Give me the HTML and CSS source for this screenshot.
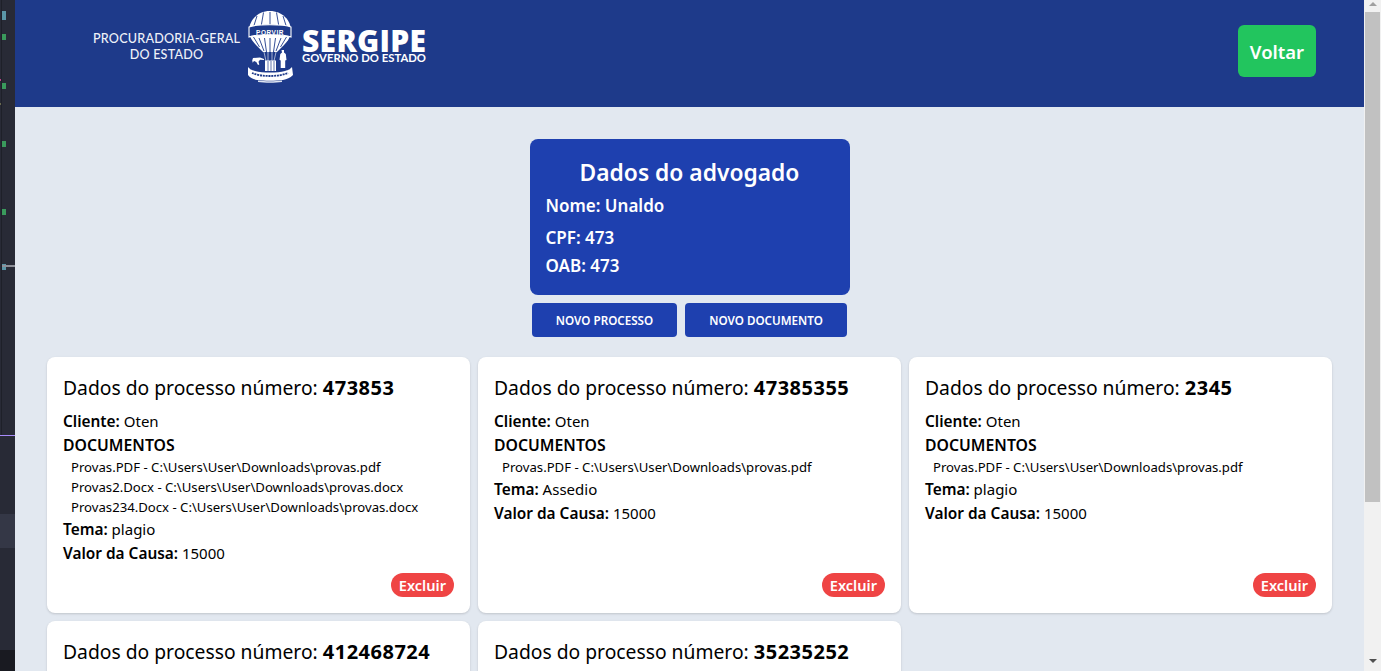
FILE: index.html
```html
<!DOCTYPE html>
<html lang="pt-BR">
<head>
<meta charset="utf-8">
<title>Dados do advogado</title>
<link rel="stylesheet" href="styles.css">
</head>
<body>
<div class="strip">
  <div class="rail">
    <span class="tick tick-blue tick-a"></span>
    <span class="tick tick-b"></span>
    <span class="mark mark-pink"></span>
    <span class="tick tick-c"></span>
    <span class="mark mark-olive"></span>
    <span class="tick tick-d"></span>
    <span class="tick tick-e"></span>
    <span class="tick tick-blue tick-f"></span>
    <span class="rule"></span>
  </div>
  <div class="panel"><div class="panel-row"></div></div>
  <div class="status"></div>
</div>
<main class="page">
  <header class="topbar">
    <div class="logo">
      <div class="logo-pge">PROCURADORIA-GERAL<br>DO ESTADO</div>
      <svg class="crest" viewBox="0 0 46 72" width="46" height="72" aria-hidden="true">
        <path d="M23 0C11 0 2 9 2 20c0 7 5 12 9 16l5 5h14l5-5c4-4 9-9 9-16C44 9 35 0 23 0z" fill="#fff"/>
        <path d="M23 1v15M16.500 1.500l-2.500 14.500M29.500 1.500l2.500 14.500M10 5l-3.500 11M36 5l3.500 11M23 27v14M17.500 27l2 14M28.500 27l-2 14M12 27l5 13M34 27l-5 13M6.500 26l6 10M39.500 26l-6 10" stroke="#1e3a8a" stroke-width=".9" fill="none"/>
        <path d="M2 16c7-3 35-3 42 0v10c-7-3-35-3-42 0z" fill="#1e3a8a" stroke="#fff" stroke-width="1.100"/>
        <text x="23" y="23.500" class="crest-word" text-anchor="middle">PORVIR</text>
        <path d="M17 41l2 9M29 41l-2 9M21 41v9M25 41v9" stroke="#fff" stroke-width=".6"/>
        <path d="M18 49.500h11v10.500H18z" fill="#fff"/>
        <path d="M21 50v10M24 50v10M27 50v10" stroke="#1e3a8a" stroke-width=".7"/>
        <path d="M6 47l7-.5 4 1.500v1l-4-.2-1.500 2 .8 2.700-1.300.4-1.700-3-2.300-.8-1.300 1.700-.5-2.200z" fill="#fff"/>
        <path d="M34.500 39h2.500v2.500l1.800 1.500.7 6-1.300.5V57h-4.500v-7.500l-1.200-.7.8-5.800 1.700-1.500z" fill="#fff"/>
        <path d="M1 56c2 2 3 3 7 4 8 2 22 2 30 0 4-1 5-2 7-4l1 8c-3 3-6 4-10 5-7 1-19 1-26 0-4-1-7-2-9-5z" fill="#fff"/>
        <path d="M5 62c9 4 27 4 36 0" stroke="#1e3a8a" stroke-width="1.800" stroke-dasharray="2 .8" fill="none"/>
        <path d="M11 69.500c7 1 17 1 24 0v1.500c-7 1-17 1-24 0z" fill="#dfe5f2"/>
      </svg>
      <div class="logo-state">
        <div class="logo-name">SERGIPE</div>
        <div class="logo-gov">GOVERNO DO ESTADO</div>
      </div>
    </div>
    <a class="back" href="#">Voltar</a>
  </header>
  <section class="summary">
    <div class="lawyer">
      <h1 class="lawyer-title">Dados do advogado</h1>
      <p class="lawyer-name">Nome: Unaldo</p>
      <p class="lawyer-line">CPF: 473</p>
      <p class="lawyer-line">OAB: 473</p>
    </div>
    <div class="actions">
      <a class="action action-process" href="#">NOVO PROCESSO</a>
      <a class="action action-document" href="#">NOVO DOCUMENTO</a>
    </div>
  </section>
  <section class="cards">
    <article class="card">
      <h2 class="card-title">Dados do processo número: <b>473853</b></h2>
      <p class="field"><b>Cliente:</b> Oten</p>
      <p class="docs-head">DOCUMENTOS</p>
      <ul class="docs">
        <li>Provas.PDF - C:\Users\User\Downloads\provas.pdf</li>
        <li>Provas2.Docx - C:\Users\User\Downloads\provas.docx</li>
        <li>Provas234.Docx - C:\Users\User\Downloads\provas.docx</li>
      </ul>
      <p class="field"><b>Tema:</b> plagio</p>
      <p class="field"><b>Valor da Causa:</b> 15000</p>
      <a class="delete" href="#">Excluir</a>
    </article>
    <article class="card">
      <h2 class="card-title">Dados do processo número: <b>47385355</b></h2>
      <p class="field"><b>Cliente:</b> Oten</p>
      <p class="docs-head">DOCUMENTOS</p>
      <ul class="docs">
        <li>Provas.PDF - C:\Users\User\Downloads\provas.pdf</li>
      </ul>
      <p class="field"><b>Tema:</b> Assedio</p>
      <p class="field"><b>Valor da Causa:</b> 15000</p>
      <a class="delete" href="#">Excluir</a>
    </article>
    <article class="card">
      <h2 class="card-title">Dados do processo número: <b>2345</b></h2>
      <p class="field"><b>Cliente:</b> Oten</p>
      <p class="docs-head">DOCUMENTOS</p>
      <ul class="docs">
        <li>Provas.PDF - C:\Users\User\Downloads\provas.pdf</li>
      </ul>
      <p class="field"><b>Tema:</b> plagio</p>
      <p class="field"><b>Valor da Causa:</b> 15000</p>
      <a class="delete" href="#">Excluir</a>
    </article>
    <article class="card">
      <h2 class="card-title">Dados do processo número: <b>412468724</b></h2>
    </article>
    <article class="card">
      <h2 class="card-title">Dados do processo número: <b>35235252</b></h2>
    </article>
  </section>
</main>
<div class="scrollbar">
  <div class="arrow arrow-up"></div>
  <div class="thumb"></div>
  <div class="arrow arrow-down"></div>
</div>
</body>
</html>
```
FILE: styles.css
```css
* { box-sizing: border-box; }
html, body { margin: 0; height: 671px; overflow: hidden; }
body {
  display: flex;
  font-family: "Noto Sans", "Open Sans", sans-serif;
  color: #000;
  background: #e2e8f0;
}
p, h1, h2, ul { margin: 0; padding: 0; }
a { text-decoration: none; }

.strip { width: 15px; flex: none; display: flex; flex-direction: column; background: #282a36; }
.rail { height: 436px; flex: none; position: relative; border-bottom: 1px solid #a78bfa; }
.rail::before { content: ""; position: absolute; left: 1px; top: 0; bottom: 0; width: 1px; background: #1e2029; }
.tick { position: absolute; left: 2px; width: 4px; height: 6px; background: #3a9a5c; }
.tick-blue { background: #5b96a8; }
.tick-a { top: 11px; height: 9px; }
.tick-b { top: 34px; }
.tick-c { top: 83px; }
.tick-d { top: 141px; }
.tick-e { top: 209px; }
.tick-f { top: 264px; }
.mark { position: absolute; left: 0; width: 1px; height: 2px; }
.mark-pink { top: 79px; background: #c0458a; }
.mark-olive { top: 103px; background: #6a6a50; }
.rule { position: absolute; left: 2px; right: 0; top: 265px; height: 2px; background: #8d8f98; }
.panel { flex: 1; padding-top: 78px; }
.panel-row { height: 34px; background: #343746; }
.status { height: 21px; flex: none; background: #191a21; }

.page { flex: 1; min-width: 0; height: 671px; overflow: hidden; }
.scrollbar { width: 17px; flex: none; display: flex; flex-direction: column; background: #f1f1f1; }
.thumb { height: 490px; margin: 0 1px; background: #c1c1c1; flex: none; }
.arrow { flex: none; display: flex; justify-content: center; }
.arrow-up { height: 12px; }
.arrow::before { content: ""; border-left: 4px solid transparent; border-right: 4px solid transparent; }
.arrow-up::before { height: 0; margin-top: 2px; border-bottom: 4px solid #a0a0a0; }
.arrow-down { margin-top: auto; height: 17px; }
.arrow-down::before { height: 0; margin-top: 5px; border-top: 4px solid #505050; }

.topbar {
  height: 107px;
  background: #1e3a8a;
  display: flex;
  align-items: center;
  justify-content: space-between;
  padding: 0 48px 5px 78px;
}
.logo { display: flex; align-items: center; color: #fff; margin-bottom: 8px; }
.logo-pge { width: 147px; flex: none; text-align: center; white-space: nowrap; font: 500 12.6px/16px "Lato", sans-serif; letter-spacing: .2px; color: #eef1f8; }
.crest { margin: 0 9px 0 7px; flex: none; }
.crest-word { font: 700 6.5px "Liberation Sans", sans-serif; fill: #fff; letter-spacing: .5px; }
.logo-name { font: 800 30px/22px "Open Sans", sans-serif; letter-spacing: .3px; }
.logo-gov { font: 700 11.3px/12px "Lato", sans-serif; white-space: nowrap; }
.back {
  width: 78px; height: 52px;
  display: flex; align-items: center; justify-content: center;
  background: #22c55e;
  color: #fff;
  border-radius: 6px;
  font-size: 18.5px;
  font-weight: 600;
}

.summary { padding-top: 32px; display: flex; flex-direction: column; align-items: center; }
.lawyer {
  width: 320px; height: 156px;
  padding: 15px 16px 0;
  background: #1e40af;
  border-radius: 8px;
  color: #fff;
  font-weight: 600;
}
.lawyer-title { font-size: 22.8px; line-height: 37px; font-weight: 600; text-align: center; margin-bottom: 1px; }
.lawyer-name { font-size: 17px; line-height: 28px; margin-bottom: 4px; }
.lawyer-line { font-size: 17px; line-height: 28px; }
.actions { margin-top: 8px; display: flex; gap: 8px; }
.action {
  height: 34px;
  display: flex; align-items: center; justify-content: center;
  background: #1e40af;
  color: #fff;
  border-radius: 4px;
  font-size: 11.65px;
  font-weight: 600;
}
.action-process { width: 145px; }
.action-document { width: 162px; }

.cards {
  margin-top: 20px;
  padding: 0 32px;
  display: grid;
  grid-template-columns: repeat(3, 423px);
  grid-auto-rows: 255.7px;
  gap: 8px;
}
.card {
  position: relative;
  padding: 17px 16px 16px;
  background: #fff;
  border-radius: 8px;
  box-shadow: 0 1px 3px rgba(0,0,0,.1), 0 1px 2px rgba(0,0,0,.06);
}
.card-title { font-size: 19.3px; line-height: 28px; font-weight: 400; margin-bottom: 7px; }
.card-title b { font-size: 20px; line-height: 1; font-weight: 700; letter-spacing: .5px; }
.field { font-size: 15px; line-height: 24px; }
.field b { font-size: 15.4px; line-height: 1; font-weight: 600; }
.docs-head { font-size: 15.8px; line-height: 24px; font-weight: 600; }
.docs { list-style: none; padding-left: 8px; font-size: 13.15px; line-height: 20px; }
.delete {
  position: absolute; right: 16px; bottom: 16px;
  height: 24px; padding: 0 8px;
  display: flex; align-items: center;
  background: #ef4444;
  color: #fff;
  border-radius: 12px;
  font-size: 14.6px;
  font-weight: 600;
}
```
